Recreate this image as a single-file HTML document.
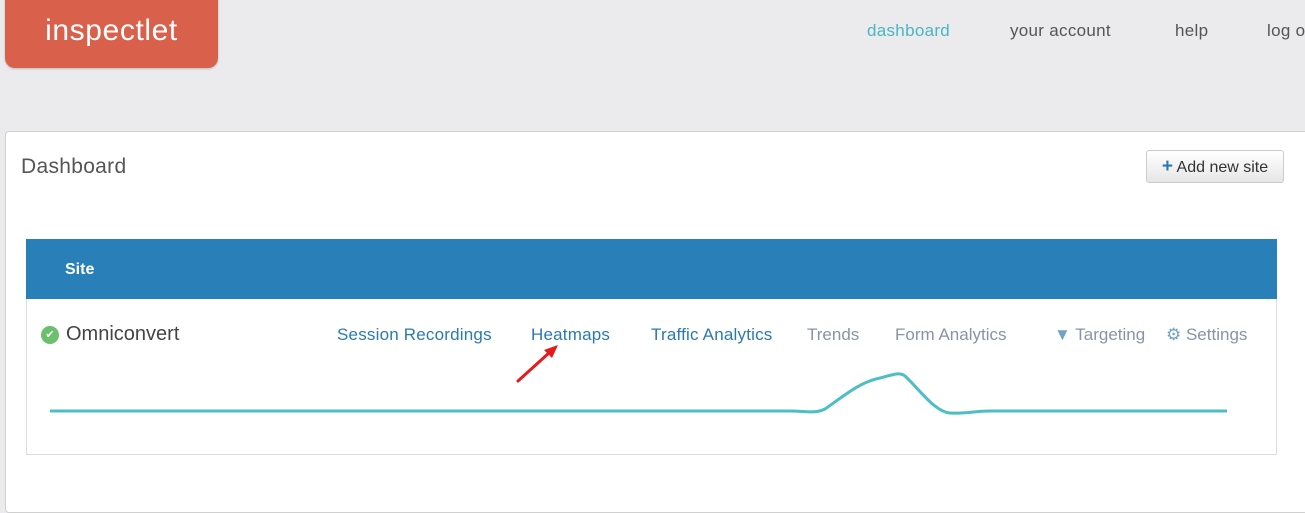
<!DOCTYPE html>
<html><head><style>
body{margin:0;width:1305px;height:490px;overflow:hidden;background:#ebebed;font-family:"Liberation Sans",sans-serif;position:relative}
.a{position:absolute;white-space:nowrap}
</style></head><body>
<div class="a" style="left:5px;top:-10px;width:213px;height:78px;background:#d9604a;border-radius:10px;box-shadow:0 1px 2px rgba(0,0,0,.2)"></div>
<div class="a" style="left:5px;top:12px;width:213px;text-align:center;color:#fff;font-size:30px;line-height:38px;letter-spacing:0.6px">inspectlet</div>
<div class="a" style="left:867px;top:21px;font-size:17px;color:#4ab5c4;letter-spacing:0.3px">dashboard</div>
<div class="a" style="left:1010px;top:21px;font-size:17px;color:#555;letter-spacing:0.3px">your account</div>
<div class="a" style="left:1175px;top:21px;font-size:17px;color:#555;letter-spacing:0.3px">help</div>
<div class="a" style="left:1267px;top:21px;font-size:17px;color:#555;letter-spacing:0.3px">log out</div>
<div class="a" style="left:5px;top:131px;width:1305px;height:380px;background:#fff;border:1px solid #d0d0d0;border-radius:4px"></div>
<div class="a" style="left:21px;top:155px;font-size:21px;color:#555;letter-spacing:0.3px">Dashboard</div>
<div class="a" style="left:1146px;top:150px;width:136px;height:31px;border:1px solid #ccc;border-radius:3px;background:linear-gradient(#fff,#e6e6e6);font-size:16px;color:#333;line-height:31px;text-align:center"><b style="color:#2a7ab0;font-size:19px">+</b> Add new site</div>
<div class="a" style="left:26px;top:239px;width:1251px;height:216px;border:1px solid #ddd;box-sizing:border-box"></div>
<div class="a" style="left:26px;top:239px;width:1251px;height:60px;background:#2980b9"></div>
<div class="a" style="left:65px;top:261px;font-size:16px;font-weight:bold;color:#fff">Site</div>
<div class="a" style="left:41px;top:326px;width:18px;height:18px;border-radius:50%;background:#6cbf6c;color:#fff;font-size:11px;line-height:18px;text-align:center">✔</div>
<div class="a" style="left:66px;top:323px;font-size:20px;color:#444">Omniconvert</div>
<div class="a" style="left:337px;top:325px;font-size:17px;color:#2a7ab0;letter-spacing:0.2px">Session Recordings</div>
<div class="a" style="left:531px;top:325px;font-size:17px;color:#2a7ab0;letter-spacing:0.2px">Heatmaps</div>
<div class="a" style="left:651px;top:325px;font-size:17px;color:#2a7ab0;letter-spacing:0.2px">Traffic Analytics</div>
<div class="a" style="left:807px;top:325px;font-size:17px;color:#8a93a6">Trends</div>
<div class="a" style="left:895px;top:325px;font-size:17px;color:#8a93a6">Form Analytics</div>
<div class="a" style="left:1054px;top:325px;font-size:17px;color:#8a93a6"><span style="color:#6fa3c7">▼</span> Targeting</div>
<div class="a" style="left:1166px;top:325px;font-size:17px;color:#8a93a6"><span style="color:#6fa3c7">⚙</span> Settings</div>
<svg class="a" style="left:0;top:0" width="1305" height="490">
<path d="M50 411 L790 411 C805 411 815 414 825 409 C845 395 860 382 880 378 C895 374 900 372 905 376 C920 390 935 412 950 413 C965 414 975 411 990 411 L1227 411" fill="none" stroke="#4bbfc3" stroke-width="3"/>
<line x1="518" y1="381" x2="550" y2="352" stroke="#e8191a" stroke-width="3" stroke-linecap="round"/>
<polygon points="558,345 544,350 552,358" fill="#e8191a"/>
</svg>
</body></html>
